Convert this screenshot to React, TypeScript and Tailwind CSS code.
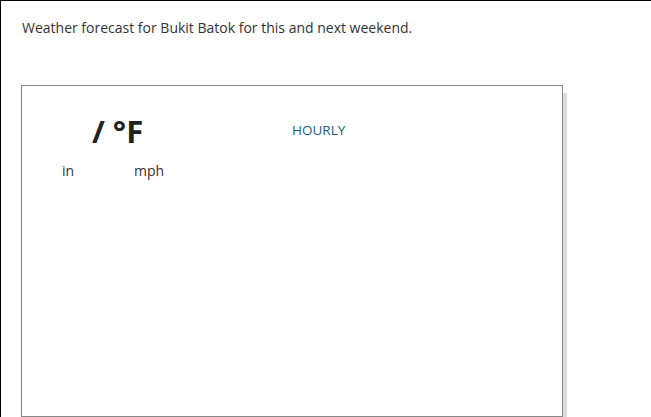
export default function App() {
  return (
    <div
      className="w-[651px] h-[417px] overflow-hidden border-t border-l border-black bg-white text-[#333]"
      style={{ fontFamily: '"Open Sans", "Noto Sans", sans-serif' }}
    >
      <p className="pl-[21px] pt-[17px] text-[14px] leading-[20px]">
        Weather forecast for Bukit Batok for this and next weekend.
      </p>
      <div className="ml-[20px] mt-[47px] w-[542px] h-[332px] border border-[#888] shadow-[4px_8px_0_#ddd]">
        <div className="flex items-start pt-[25px]">
          <div className="w-[270px]">
            <div className="pl-[70px] text-[31px] font-bold leading-[40px] text-[#222]">/ °F</div>
            <div className="flex pl-[40px] pt-[10px] text-[14px] leading-[20px]">
              <span className="w-[72px]">in</span>
              <span>mph</span>
            </div>
          </div>
          <div className="pt-[9px] text-[13.5px] leading-[20px] text-[#1b5f7f]">HOURLY</div>
        </div>
      </div>
    </div>
  );
}
